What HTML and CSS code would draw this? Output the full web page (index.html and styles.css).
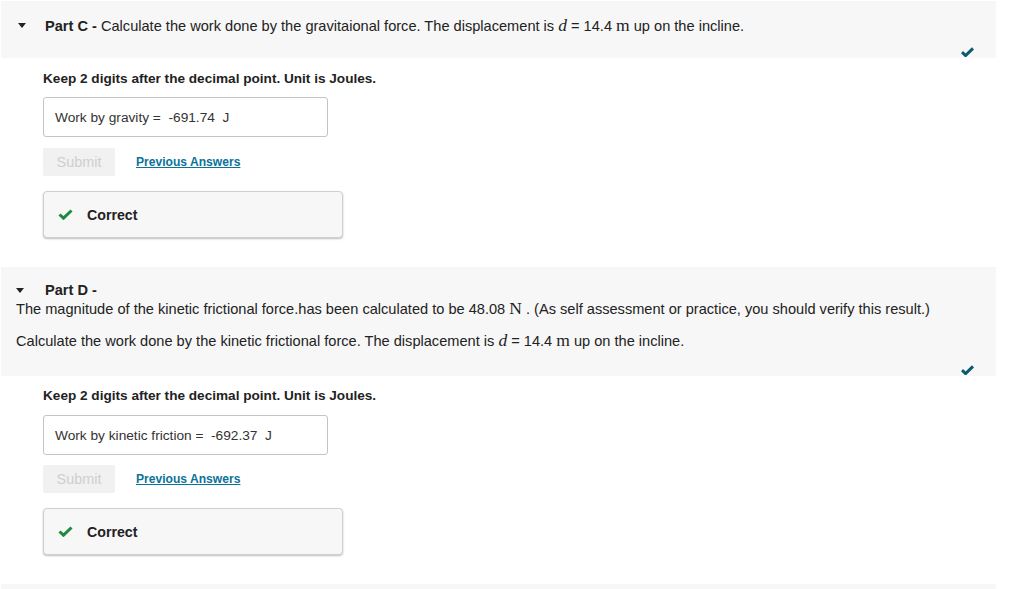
FILE: index.html
```html
<!DOCTYPE html>
<html>
<head>
<meta charset="utf-8">
<link rel="stylesheet" href="styles.css">
</head>
<body>
<div class="page">
  <section class="part">
    <div class="part-head head-c">
      <div class="title-row">
        <span class="tri"></span>
        <span class="title"><b>Part C - </b>Calculate the work done by the gravitaional force. The displacement is <i class="mi">d</i> = 14.4 <span class="mr">m</span> up on the incline.</span>
      </div>
      <svg class="done" width="13" height="10" viewBox="0 0 13 10"><path d="M1 5.2 L4.6 8.6 L12 1.4" fill="none" stroke="#0b5b70" stroke-width="3"/></svg>
    </div>
    <div class="part-body">
      <p class="hint">Keep 2 digits after the decimal point. Unit is Joules.</p>
      <div class="answer">Work by gravity =&nbsp; -691.74 &nbsp;J</div>
      <div class="actions">
        <span class="submit">Submit</span>
        <a class="prev" href="#">Previous Answers</a>
      </div>
      <div class="correct">
        <svg width="15" height="11" viewBox="0 0 15 11"><path d="M1.5 5.5 L5.5 9.2 L13.5 1.5" fill="none" stroke="#1d8a3e" stroke-width="3"/></svg>
        <span>Correct</span>
      </div>
    </div>
  </section>

  <section class="part">
    <div class="part-head head-d">
      <div class="title-row row-d">
        <span class="tri tri-d"></span>
        <span class="title"><b>Part D -</b></span>
      </div>
      <p class="desc">The magnitude of the kinetic frictional force.has been calculated to be 48.08 <span class="mr">N</span> . (As self assessment or practice, you should verify this result.)</p>
      <p class="desc desc2">Calculate the work done by the kinetic frictional force. The displacement is <i class="mi">d</i> = 14.4 <span class="mr">m</span> up on the incline.</p>
      <svg class="done" width="13" height="10" viewBox="0 0 13 10"><path d="M1 5.2 L4.6 8.6 L12 1.4" fill="none" stroke="#0b5b70" stroke-width="3"/></svg>
    </div>
    <div class="part-body">
      <p class="hint hint-d">Keep 2 digits after the decimal point. Unit is Joules.</p>
      <div class="answer">Work by kinetic friction =&nbsp; -692.37 &nbsp;J</div>
      <div class="actions">
        <span class="submit">Submit</span>
        <a class="prev" href="#">Previous Answers</a>
      </div>
      <div class="correct">
        <svg width="15" height="11" viewBox="0 0 15 11"><path d="M1.5 5.5 L5.5 9.2 L13.5 1.5" fill="none" stroke="#1d8a3e" stroke-width="3"/></svg>
        <span>Correct</span>
      </div>
    </div>
  </section>
  <div class="next-strip"></div>
</div>
</body>
</html>
```

FILE: styles.css
```css
html, body {
  margin: 0;
  padding: 0;
  background: #fff;
}
body {
  font-family: "Liberation Sans", Arial, sans-serif;
  color: #222;
  font-size: 14.6px;
}
.page {
  width: 995px;
  padding: 1px 0 0 1px;
}
.part-head {
  position: relative;
  background: #f7f7f7;
}
.head-c {
  height: 57px;
  padding-top: 14px;
  box-sizing: border-box;
}
.title-row {
  display: flex;
  align-items: center;
  line-height: 20px;
}
.tri {
  width: 0;
  height: 0;
  border-left: 4px solid transparent;
  border-right: 4px solid transparent;
  border-top: 5px solid #222;
  margin: 0 19px 0 17px;
}
.tri-d {
  margin: 0 21px 0 15px;
}
.title b {
  font-weight: bold;
}
.mi {
  font-family: "Liberation Serif", "Times New Roman", serif;
  font-size: 17.5px;
  font-style: italic;
}
.mr {
  font-family: "Liberation Serif", "Times New Roman", serif;
  font-size: 17.5px;
}
.done {
  position: absolute;
  right: 22px;
  bottom: 1px;
}
.head-d {
  padding: 15px 0 26px;
}
.row-d {
  line-height: 17px;
}
.desc {
  margin: 0;
  padding-left: 15px;
  line-height: 18px;
}
.desc2 {
  margin-top: 13px;
}
.part-body {
  padding-left: 42px;
  padding-bottom: 29px;
}
.hint {
  margin: 12px 0 9px;
  font-size: 13.6px;
  font-weight: bold;
  line-height: 18px;
}
.hint-d {
  margin-top: 11px;
  margin-bottom: 10px;
}
.answer {
  width: 285px;
  height: 40px;
  box-sizing: border-box;
  border: 1px solid #c4c4c4;
  border-radius: 3px;
  padding-left: 11px;
  display: flex;
  align-items: center;
  font-size: 13.7px;
  color: #333;
}
.actions {
  display: flex;
  align-items: center;
  margin-top: 11px;
  gap: 21px;
}
.part + .part .actions {
  margin-top: 10px;
}
.submit {
  width: 72px;
  height: 28px;
  background: #f1f1f1;
  border-radius: 2px;
  color: #cfcfcf;
  font-size: 14.4px;
  display: flex;
  align-items: center;
  justify-content: center;
}
.prev {
  color: #0b7399;
  font-weight: bold;
  font-size: 12.1px;
  text-decoration: underline;
}
.correct {
  margin-top: 15px;
  width: 300px;
  height: 47px;
  box-sizing: border-box;
  border: 1px solid #cfcfcf;
  border-radius: 4px;
  background: #f7f7f7;
  box-shadow: 0 1px 2px rgba(0,0,0,0.25);
  display: flex;
  align-items: center;
  padding-left: 14px;
  gap: 14px;
  font-weight: bold;
  font-size: 14.2px;
  color: #222;
}
.next-strip {
  height: 6px;
  background: #f7f7f7;
}
```
